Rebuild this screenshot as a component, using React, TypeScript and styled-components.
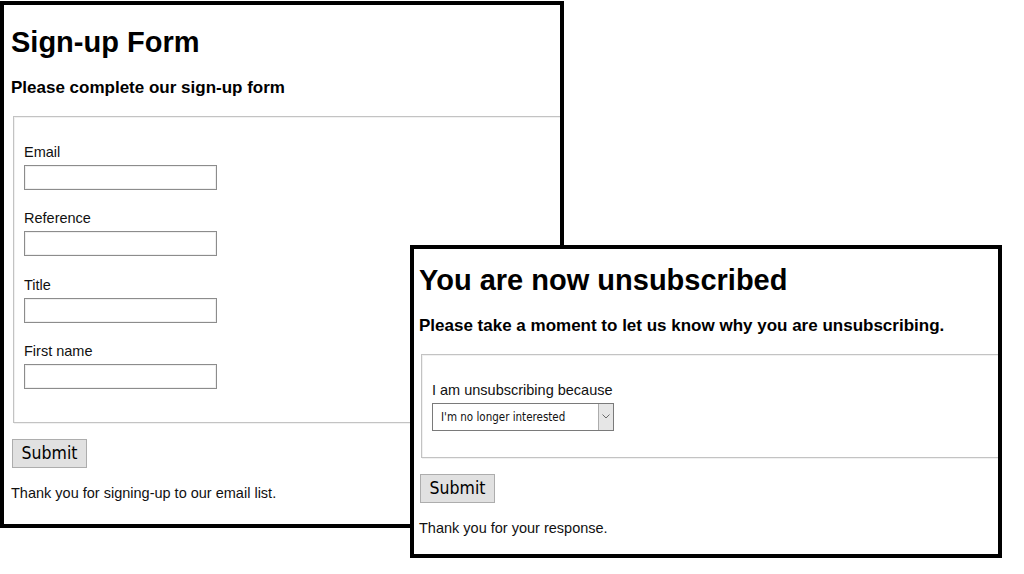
import styled, { createGlobalStyle } from "styled-components";

const GlobalStyle = createGlobalStyle`
  html, body {
    margin: 0;
    padding: 0;
    background: #fff;
  }
  body {
    font-family: "Liberation Sans", Arial, sans-serif;
    color: #000;
  }
`;

const Desktop = styled.div`
  position: relative;
  width: 1024px;
  height: 574px;
  overflow: hidden;
  background: #fff;
`;

// each screenshot window sits at its own place on the canvas
const Window = styled.section<{
  $left: number;
  $top: number;
  $width: number;
  $height: number;
  $padTop: number;
  $padLeft: number;
}>`
  position: absolute;
  left: ${(p) => p.$left}px;
  top: ${(p) => p.$top}px;
  width: ${(p) => p.$width}px;
  height: ${(p) => p.$height}px;
  box-sizing: border-box;
  border: 4px solid #000;
  background: #fff;
  overflow: hidden;
  padding: ${(p) => p.$padTop}px 0 0 ${(p) => p.$padLeft}px;
`;

const Title = styled.h1`
  margin: 0 0 19.5px;
  font-size: 29px;
  line-height: 34px;
  font-weight: 700;
  white-space: nowrap;
`;

const Subtitle = styled.h3`
  margin: 0 0 18px;
  font-size: 17px;
  line-height: 20px;
  font-weight: 700;
  white-space: nowrap;
`;

const Fields = styled.fieldset<{ $padBottom: number }>`
  margin: 0 -30px 0 2px;
  min-width: 0;
  border: 1px solid #c3c3c3;
  box-shadow: inset 1px 1px 0 #f1f1f1, 1px 1px 0 #f1f1f1;
  padding: 26.5px 0 ${(p) => p.$padBottom}px 10px;
  display: flex;
  flex-direction: column;
  gap: 20.5px;
`;

const Field = styled.div`
  display: flex;
  flex-direction: column;
  align-items: flex-start;
`;

const Label = styled.label`
  display: block;
  font-size: 14.5px;
  line-height: 17px;
  margin-bottom: 4px;
  color: #111;
  white-space: nowrap;
`;

const TextInput = styled.input`
  display: block;
  box-sizing: border-box;
  width: 193px;
  height: 25px;
  margin: 0;
  border: 1px solid #8c8c8c;
  background: #fff;
  box-shadow: inset 0 0 0 1px #f0f0f0;
  outline: none;
`;

const SelectBox = styled.div`
  position: relative;
  width: 182px;
  height: 28px;
`;

const Select = styled.select`
  appearance: none;
  box-sizing: border-box;
  width: 100%;
  height: 100%;
  margin: 0;
  border: 1px solid #7a7a7a;
  border-radius: 0;
  background: #fff;
  padding: 0 0 0 8px;
  font-family: "DejaVu Sans Condensed", "DejaVu Sans", sans-serif;
  font-size: 11.5px;
  color: #111;
  outline: none;
`;

const SelectArrow = styled.span`
  position: absolute;
  top: 1px;
  right: 1px;
  bottom: 1px;
  width: 15px;
  box-sizing: border-box;
  background: #e6e6e6;
  border-left: 1px solid #acacac;
  display: flex;
  align-items: center;
  justify-content: center;
  pointer-events: none;
`;

const SubmitButton = styled.button`
  display: block;
  box-sizing: border-box;
  width: 75px;
  height: 29px;
  margin: 16px 0 0 1px;
  padding: 0;
  border: 1px solid #adadad;
  border-radius: 0;
  background: #e1e1e1;
  color: #000;
  font-family: "DejaVu Sans Condensed", "DejaVu Sans", sans-serif;
  font-size: 17.5px;
  line-height: 27px;
`;

const Note = styled.p`
  margin: 17px 0 0;
  font-size: 14.5px;
  line-height: 17px;
  color: #111;
  white-space: nowrap;
`;

const signupFields = ["Email", "Reference", "Title", "First name"];

function Chevron() {
  return (
    <svg width="8" height="5" viewBox="0 0 8 5">
      <path d="M0.5 0.5 L4 4 L7.5 0.5" fill="none" stroke="#6a6a6a" strokeWidth="1" />
    </svg>
  );
}

export default function App() {
  return (
    <>
      <GlobalStyle />
      <Desktop>
        <Window $left={0} $top={1} $width={564} $height={527} $padTop={19.7} $padLeft={7}>
          <Title>Sign-up Form</Title>
          <Subtitle>Please complete our sign-up form</Subtitle>
          <Fields $padBottom={33.3}>
            {signupFields.map((name) => (
              <Field key={name}>
                <Label>{name}</Label>
                <TextInput type="text" />
              </Field>
            ))}
          </Fields>
          <SubmitButton>Submit</SubmitButton>
          <Note>Thank you for signing-up to our email list.</Note>
        </Window>

        <Window $left={410} $top={245} $width={592} $height={313} $padTop={13.5} $padLeft={5}>
          <Title>You are now unsubscribed</Title>
          <Subtitle>Please take a moment to let us know why you are unsubscribing.</Subtitle>
          <Fields $padBottom={26}>
            <Field>
              <Label>I am unsubscribing because</Label>
              <SelectBox>
                <Select defaultValue="not-interested">
                  <option value="not-interested">I'm no longer interested</option>
                  <option value="too-many">I get too many emails</option>
                  <option value="never">I never signed up</option>
                </Select>
                <SelectArrow>
                  <Chevron />
                </SelectArrow>
              </SelectBox>
            </Field>
          </Fields>
          <SubmitButton>Submit</SubmitButton>
          <Note>Thank you for your response.</Note>
        </Window>
      </Desktop>
    </>
  );
}
